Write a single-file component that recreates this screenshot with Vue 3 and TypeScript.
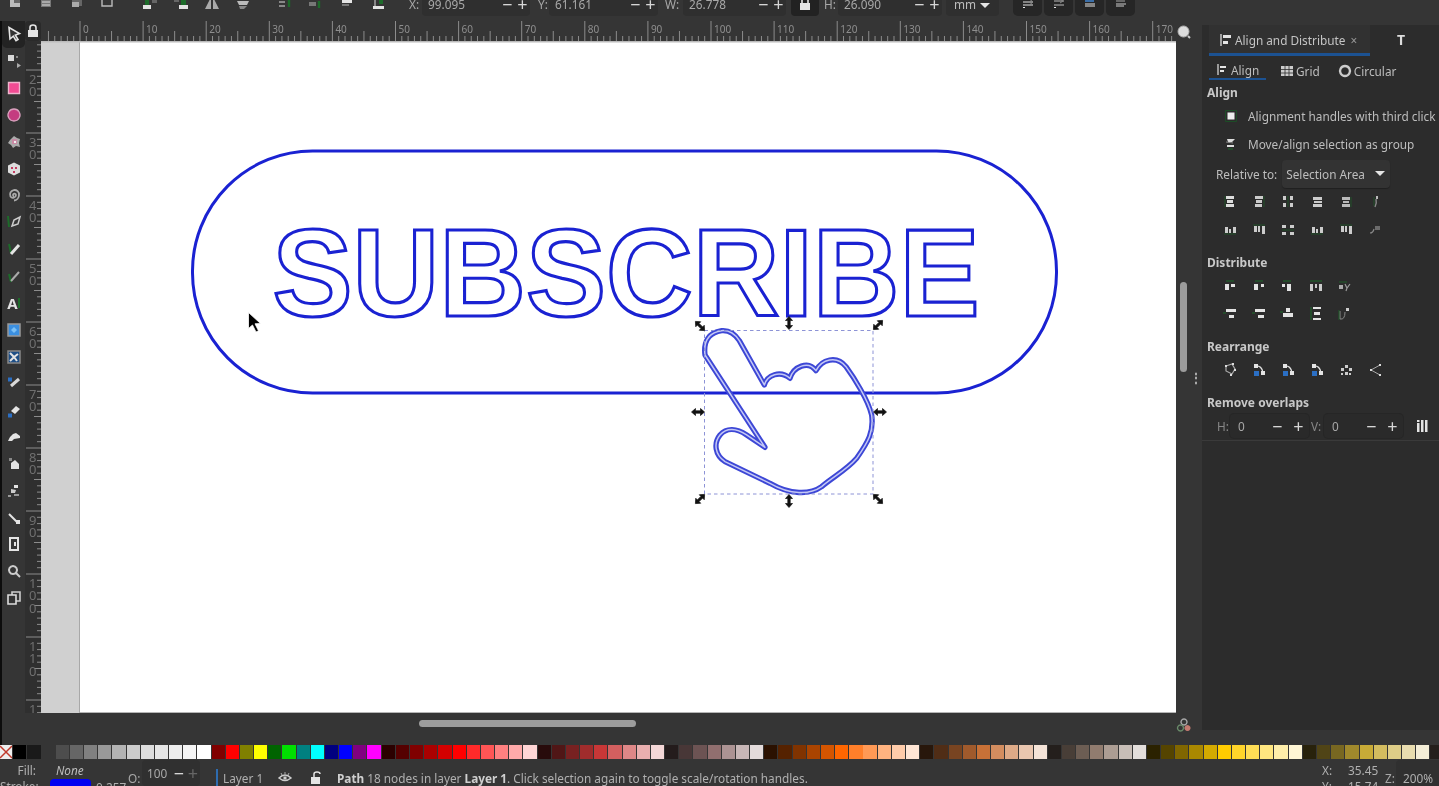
<script setup lang="ts">
import { h, type FunctionalComponent } from 'vue'

type Shape = { d?: string; f?: string; s?: string; w?: number; t?: string }

const W = '#e4e4e4'
const G = '#1d6b2a'
const B = '#2b6fc4'
const P = '#d9d9d9'

const icons: Record<string, Shape[]> = {
  select: [{ d: 'M3 1.5l10.5 6-4.2 1.6 2.7 4.4-2 1.2-2.7-4.5L4 13z', s: W, w: 1.6, f: '#333' }],
  node: [{ d: 'M2 2h6v6H2z', f: P }, { d: 'M11 10l4 2.5-4 2.5z', f: '#aaa' }, { d: 'M10 3h2v2h-2z', f: '#888' }],
  rect: [{ d: 'M2.5 2.5h11v11h-11z', f: '#f24b93', s: '#efb5cd', w: 1.4 }],
  circle: [{ d: 'M8 2a6 6 0 1 0 .01 0z', f: '#c43c80', s: '#d9a0bd', w: 1.3 }],
  star: [{ d: 'M8 2l3 2 3 1-1 4 1 4-4-1-3 2-2-3-3-2 2-3z', f: '#aaa' }, { d: 'M6 5h5v5H6z', f: '#c98aa5' }, { d: 'M8 7h2v2H8z', f: '#eee' }],
  box: [{ d: 'M8 1.5l6 3v7l-6 3-6-3v-7z', f: '#ddd' }, { d: 'M5 6h2v2H5zM9 6h2v2H9zM7 10h2v2H7z', f: '#c43c60' }],
  spiral: [{ d: 'M8 9.5a1.5 1.5 0 1 1 2-1.5 3 3 0 0 1-5.5 1.5A4.5 4.5 0 1 1 13 8a5.5 5.5 0 0 1-5 5.5', s: '#aaa', w: 1.8 }],
  pen: [{ d: 'M2 2l1 11', s: G, w: 2 }, { d: 'M6 12l2-6 6-3-2 7z', s: '#ccc', w: 1.5 }],
  pencil: [{ d: 'M3 3l2 9', s: G, w: 2 }, { d: 'M5 13L13 4', s: W, w: 3 }],
  callig: [{ d: 'M3 6l2 8', s: G, w: 2 }, { d: 'M5 13L13 4', s: '#aaa', w: 2 }],
  text: [{ t: 'A', f: W }, { d: 'M13 3v10', s: G, w: 2 }],
  gradient: [{ d: 'M2 2h12v12H2z', f: '#3b8fe0', s: '#999', w: 1.5 }, { d: 'M8 5l3 3-3 3-3-3z', f: '#7cc0f5' }],
  mesh: [{ d: 'M2 2h12v12H2z', f: '#1f4f86', s: '#888', w: 1.5 }, { d: 'M8 8L4 4M8 8l4-3M8 8l3 4M8 8l-4 4', s: W, w: 2 }],
  dropper: [{ d: 'M5 11l8-7', s: P, w: 3 }, { d: 'M2 2.5h4v4H2z', f: B }],
  bucket: [{ d: 'M5 9l5-5 4 3-5 5z', f: W }, { d: 'M2 11.5h4v4H2z', f: B }],
  eraser: [{ d: 'M2 12q1-4 5-7l3-1 4 3v2l-6 1-2 2z', f: W }],
  fill: [{ d: 'M3 2h3v3H3z', f: '#888' }, { d: 'M5 7l4-3 4 4v5H5z', f: W }],
  spray: [{ d: 'M8 2h4v3H8z', f: W }, { d: 'M5 6l5 1-1 3H5z', f: '#ccc' }, { d: 'M2 12h3v2H2zM8 11h5v2H8z', f: '#999' }],
  conn: [{ d: 'M3 4l8 8', s: W, w: 2 }, { d: 'M10 10h4v4h-4z', f: W }],
  page: [{ d: 'M4 2h8v12H4z', s: W, w: 2 }, { d: 'M8 6h2v4H8z', f: W }],
  zoom: [{ d: 'M7 3a4 4 0 1 0 .01 0z', s: '#ccc', w: 2 }, { d: 'M10 10l4 4', s: '#ccc', w: 2 }],
  pages: [{ d: 'M6 2h8v9H6z', s: '#ccc', w: 1.6 }, { d: 'M2 5h8v9H2z', s: '#ddd', w: 1.6, f: '#333' }],

  top1: [{ d: 'M3 0h10v11H3z', f: '#bbb' }, { d: 'M7 0h6v7H7z', f: '#666' }],
  top2: [{ d: 'M3 0h10v11H3z', f: '#777' }, { d: 'M4 3h8M4 6h8M4 9h8', s: '#ddd', w: 1 }],
  top3: [{ d: 'M3 0h10v10H3z', f: '#666' }, { d: 'M3 6h7v5H3z', f: '#aaa' }],
  top4: [{ d: 'M2 0h10v10H2z', s: '#bbb', w: 1.4 }],
  lift1: [{ d: 'M1 9h8v4H1z', f: W }, { d: 'M3 4h4v5H3z', f: G }, { d: 'M10 2h5v5h-5z', f: '#666' }],
  lift2: [{ d: 'M6 9h9v4H6z', f: W }, { d: 'M8 3h5v6H8z', f: G }, { d: 'M1 1h5v5H1z', f: '#666' }],
  flip1: [{ d: 'M7 1v12L1 13zM9 1v12l6 0z', f: '#aaa' }],
  flip2: [{ d: 'M2 5h12l-2 4H4z', f: '#bbb' }, { d: 'M4 10h8l-3 3H5z', f: '#888' }],
  raise1: [{ d: 'M2 1h6v2H2zM2 5h6v2H2zM2 9h6v2H2z', f: '#888' }, { d: 'M12 2v9', s: G, w: 2.4 }],
  raise2: [{ d: 'M1 1h12v3H1z', f: '#aaa' }, { d: 'M1 6h7v4H1z', f: '#777' }, { d: 'M11 5v7', s: G, w: 2.4 }],
  raise3: [{ d: 'M3 4h10v3H3z', f: W }, { d: 'M3 8h7v2H3z', f: '#777' }, { d: 'M11 0h3v4h-3z', f: G }],
  raise4: [{ d: 'M3 10h11v3H3z', f: W }, { d: 'M4 1h2v9H4z', f: '#888' }, { d: 'M9 2h4v6H9z', f: G }],

  snap1: [{ d: 'M3 6h10M3 9h10', s: W, w: 1 }, { d: 'M10 3.500l3 2.500-3 2.500', s: '#888', w: 1 }, { d: 'M3 11h2v1H3z', f: W }],
  snap2: [{ d: 'M3 5h10M3 9h10', s: '#bbb', w: 1 }, { d: 'M9 3l3 2-3 2', s: '#888', w: 1 }, { d: 'M3 11h2v1H3z', f: W }],
  snap3: [{ d: 'M3 2h9v4H3z', f: '#3a6ea8' }, { d: 'M3 8h10M3 10h10', s: W, w: 1 }],
  snap4: [{ d: 'M3 3h9v3H3z', f: '#666' }, { d: 'M3 8h10M3 10h8', s: '#ccc', w: 1 }],

  align: [{ d: 'M3 2v12', s: '#ddd', w: 1.3 }, { d: 'M5 3h8v3H5zM5 9h5v3H5z', f: W }],
  alignSm: [{ d: 'M4 2v11', s: W, w: 1.2 }, { d: 'M6 4h6v2H6zM6 8h4v2H6z', f: W }],
  grid: [{ d: 'M2 3h12v10H2z', f: '#ccc' }, { d: 'M6 3v10M10 3v10M2 6.5h12M2 10h12', s: '#2d2d2d', w: 0.8 }],
  circ: [{ d: 'M8 3a5 5 0 1 0 .01 0z', s: '#ccc', w: 2.4, }],
  third: [{ d: 'M2.5 2.5h11v11h-11z', s: '#1c4d26', w: 1 }, { d: 'M4.5 4.5h7v7h-7z', f: '#eee' }],
  group: [{ d: 'M4 3h8l-3 3H5zM4 9h7v2H4z', f: '#ddd' }, { d: 'M3 6l7 1', s: '#888', w: 1 }, { d: 'M5 13h5', s: G, w: 1 }],

  a1: [{ d: 'M4 2h8v3H4zM5 6h6v3H5zM4 10h8v3H4z', f: '#ddd' }, { d: 'M3 2v11', s: G, w: 0.6 }],
  a2: [{ d: 'M4 2h8v3H4zM5 6h6v3H5zM4 10h7v3H4z', f: '#ccc' }, { d: 'M13 2v11', s: G, w: 0.6 }],
  a3: [{ d: 'M3 2h3v4H3zM10 2h3v4h-3zM3 9h3v4H3zM10 9h3v4h-3z', f: '#ccc' }, { d: 'M8 2v11', s: G, w: 0.6 }],
  a4: [{ d: 'M4 3h9v3H4zM5 7h8v2H5zM4 10h9v3H4z', f: '#ccc' }],
  a5: [{ d: 'M4 3h8v3H4zM5 7h6v2H5zM4 10h8v3H4z', f: '#bbb' }, { d: 'M13 3v10', s: G, w: 0.6 }],
  a6: [{ d: 'M8 13q2-4 1-8', s: '#888', w: 1.4 }, { d: 'M9 2h2v3H9z', f: '#bbb' }, { d: 'M7 3v9', s: G, w: 0.6 }],
  b1: [{ d: 'M3 5h3v6H3zM7 7h2v4H7zM11 5h3v6h-3z', f: '#ccc' }, { d: 'M2 12h12', s: G, w: 0.6 }],
  b2: [{ d: 'M3 4h3v6H3zM7 4h2v6H7zM11 4h3v8h-3z', f: '#ccc' }, { d: 'M2 3h12', s: G, w: 0.6 }],
  b3: [{ d: 'M2 3h4v3H2zM10 3h4v3h-4zM2 10h4v3H2zM10 10h4v3h-4z', f: '#ccc' }, { d: 'M2 8h12', s: G, w: 0.6 }],
  b6: [{ d: 'M3 11q3 0 4-4', s: '#888', w: 1.2 }, { d: 'M8 5h5M8 7h5', s: '#aaa', w: 1 }],

  d1: [{ d: 'M3 5h4v6H3zM9 5h4v3H9z', f: W }, { d: 'M4 2h8', s: G, w: 1 }],
  d2: [{ d: 'M3 5h4v6H3zM10 5h3v3h-3z', f: W }, { d: 'M4 2h8', s: G, w: 1 }],
  d3: [{ d: 'M3 5h3v3H3zM8 5h4v7H8z', f: W }, { d: 'M4 2h8', s: G, w: 1 }],
  d4: [{ d: 'M2 5h3v7H2zM7 5h2v4H7zM11 5h3v7h-3z', f: '#ccc' }, { d: 'M2 2h12', s: G, w: 1 }],
  d5: [{ d: 'M3 6h4v4H3z', f: '#aaa' }, { d: 'M9 5l2 4 3-4M11 9l-1 3', s: '#999', w: 1.2 }, { d: 'M3 3h8', s: G, w: 0.8 }],
  e1: [{ d: 'M4 3h10v3H4zM7 9h5v3H7z', f: W }, { d: 'M1 7h3', s: G, w: 1 }],
  e2: [{ d: 'M4 3h10v3H4zM7 9h6v3H7z', f: W }, { d: 'M1 7h3', s: G, w: 1 }],
  e3: [{ d: 'M7 2h4v4H7zM4 7h10v4H4z', f: W }, { d: 'M1 6h3', s: G, w: 1 }],
  e4: [{ d: 'M5 1h8v2H5zM6 6h6v3H6zM5 12h8v2H5z', f: W }, { d: 'M3 1v13', s: G, w: 1 }],
  e5: [{ d: 'M4 5v8M4 13q5 1 5-7', s: '#888', w: 1 }, { d: 'M10 2h3v3h-3z', f: '#ccc' }, { d: 'M3 4v10', s: G, w: 0.8 }],

  r1: [{ d: 'M4 4l6-2 3 5-3 5-6-3z', s: '#aaa', w: 1.2 }, { d: 'M3 3h2v2H3zM10 1h2v2h-2zM12 7h2v2h-2zM8 12h2v2H8z', f: '#ddd' }],
  r2: [{ d: 'M4 4q7-1 8 7', s: W, w: 1.4 }, { d: 'M3 2h4v4H3zM10 9h4v4h-4z', f: W }, { d: 'M3 9h5v5H3z', f: B }],
  r5: [{ d: 'M3 6h3v3H3zM7 3h3v3H7zM11 6h3v3h-3zM7 10h3v3H7zM3 11h2v2H3zM11 11h2v2h-2z', f: '#ccc' }],
  r6: [{ d: 'M13 3L4 8l9 5', s: '#aaa', w: 1 }, { d: 'M3 7h2v2H3zM12 2h2v2h-2zM12 12h2v2h-2z', f: '#ddd' }],
  ovl: [{ d: 'M3 5h2.500v9H3zM7 2h2.500v12H7zM11 2h2.500v12H11z', f: W }, { d: 'M3 2h2.500v2H3z', f: W }],

  eye: [{ d: 'M2 8q6-6 12 0-6 5-12 0z', s: '#ccc', w: 1.5 }, { d: 'M6.500 6.500h3v3h-3z', f: '#ccc' }, { d: 'M4 3l1 2M12 3l-1 2M8 2v2', s: '#aaa', w: 1 }],
  lock: [{ d: 'M3 7h9v7H3z', f: W }, { d: 'M6 7V4q0-2 3-2t3 2', s: W, w: 1.5 }],
  lockClosed: [{ d: 'M3 7h10v7H3z', f: W }, { d: 'M5 7V4.500q0-2.500 3-2.500t3 2.500V7', s: W, w: 1.6 }],
  oneone: [{ d: 'M7.500 2a5.500 5.500 0 1 0 .01 0z', f: '#ddd', s: '#aaa', w: 1 }, { d: 'M12 12l2 2', s: '#ccc', w: 2 }],
  cms: [{ d: 'M8 2a3 3 0 1 0 .01 0z', s: '#aaa', w: 1.4 }, { d: 'M4.500 8a3 3 0 1 0 .01 0z', s: '#6a8a6a', w: 1.4 }, { d: 'M11.500 8a3 3 0 1 0 .01 0z', f: '#c47a70' }],
}

const Ic: FunctionalComponent<{ name: string }> = (props) =>
  h(
    'svg',
    { viewBox: '0 0 16 16', width: 16, height: 16 },
    icons[props.name].map((s) =>
      s.t
        ? h('text', { x: 6.5, y: 13.5, 'text-anchor': 'middle', 'font-size': 15, 'font-weight': 700, 'font-family': 'Noto Sans, sans-serif', fill: s.f }, s.t)
        : h('path', { d: s.d, fill: s.f ?? 'none', stroke: s.s ?? 'none', 'stroke-width': s.w ?? 0 }),
    ),
  )
Ic.props = ['name']

const topGroups = [
  ['top1', 'top2', 'top3', 'top4'],
  ['lift1', 'lift2', 'flip1', 'flip2'],
  ['raise1', 'raise2', 'raise3', 'raise4'],
]
const snapIcons = ['snap1', 'snap2', 'snap3', 'snap4']
const tools = [
  'select', 'node', 'rect', 'circle', 'star', 'box', 'spiral', 'pen', 'pencil', 'callig', 'text',
  'gradient', 'mesh', 'dropper', 'bucket', 'eraser', 'fill', 'spray', 'conn', 'page', 'zoom', 'pages',
]
const alignRows = [
  ['a1', 'a2', 'a3', 'a4', 'a5', 'a6'],
  ['b1', 'b2', 'b3', 'b1', 'b2', 'b6'],
]
const distRows = [
  ['d1', 'd2', 'd3', 'd4', 'd5'],
  ['e1', 'e2', 'e3', 'e4', 'e5'],
]
const rearrange = ['r1', 'r2', 'r2', 'r2', 'r5', 'r6']

const hex =
  '000000 1a1a1a - 4d4d4d 666666 808080 999999 b3b3b3 cccccc dddddd e6e6e6 eeeeee f5f5f5 ffffff ' +
  '800000 ff0000 808000 ffff00 006400 00e000 008080 00ffff 000080 0000ff 800080 ff00ff ' +
  '2b0000 550000 800000 aa0000 d40000 ff0000 ff2a2a ff5555 ff8080 ffaaaa ffd5d5 ' +
  '280b0b 501616 782121 a02c2c c83737 d35f5f de8787 e9afaf f4d7d7 ' +
  '241c1c 483737 6c5353 916f6f ac9393 c8b7b7 e3dbdb ' +
  '2b1100 552200 803300 aa4400 d45500 ff6600 ff7f2a ff9955 ffb380 ffccaa ffe6d5 ' +
  '28170b 502d16 784421 a05a2c c87137 d38d5f deaa87 e9c6af f4e3d7 ' +
  '241f1c 483e37 6c5d53 917c6f ac9d93 c8beb7 e3dedb ' +
  '2b2200 554400 806600 aa8800 d4aa00 ffcc00 ffd42a ffdd55 ffe680 ffeeaa fff6d5 ' +
  '28220b 504416 786721 a0892c c8ab37 d3bc5f decd87 e9ddaf f4eed7 241f1c'
const swatches = hex.split(' ').map((c) => (c === '-' ? 'transparent' : '#' + c))

const mmX = 6.31
const hTicks: { x: number; top: number }[] = []
for (let mm = -5; mm <= 174; mm++) {
  hTicks.push({ x: 80 + mm * mmX, top: mm % 10 === 0 ? 21 : mm % 5 === 0 ? 31 : 36 })
}
const hLabels: { x: number; v: number }[] = []
for (let v = 0; v <= 170; v += 10) hLabels.push({ x: 80 + v * mmX + 3, v })

const mmY = 6.3
const vTicks: { y: number; left: number }[] = []
for (let mm = 15; mm <= 127; mm++) {
  const y = 133 + (mm - 30) * mmY
  if (y >= 42) vTicks.push({ y, left: mm % 10 === 0 ? 26 : mm % 5 === 0 ? 34 : 37 })
}
const vLabels: { y: number; v: string }[] = []
for (let v = 20; v <= 120; v += 10) vLabels.push({ y: 133 + (v - 30) * mmY, v: String(v) })

const handles = [
  [700, 326, 45], [878, 325, -45], [700, 499, -45], [878, 499, 45],
  [789, 323, 90], [789, 501, 90], [698, 412, 0], [880, 412, 0],
]
const handPath =
  'M75 135C70 95 85 68 125 62C150 60 165 72 178 92L253 225C262 195 300 180 330 205C340 170 385 150 408 182' +
  'C425 148 470 135 498 170C520 200 565 270 575 315C582 365 565 395 530 445C500 480 460 500 425 530' +
  'C390 555 330 555 270 520L135 455C105 435 100 400 120 375C140 352 170 355 200 375L255 412Z'
</script>

<template>
  <div class="app">
    <header class="toolbar">
      <div v-for="(group, i) in topGroups" :key="i" class="top-group">
        <Ic v-for="name in group" :key="name" :name="name" class="top-ic" />
      </div>
      <span class="lbl lx">X:</span>
      <div class="spin sx"><span class="val">99.095</span><i>−</i><i>+</i></div>
      <span class="lbl ly">Y:</span>
      <div class="spin sy"><span class="val">61.161</span><i>−</i><i>+</i></div>
      <span class="lbl lw">W:</span>
      <div class="spin sw"><span class="val">26.778</span><i>−</i><i>+</i></div>
      <div class="lock-btn"><Ic name="lockClosed" class="top-ic" /></div>
      <span class="lbl lh">H:</span>
      <div class="spin sh"><span class="val">26.090</span><i>−</i><i>+</i></div>
      <div class="unit">mm <b class="caret"></b></div>
      <div class="snaps">
        <div v-for="name in snapIcons" :key="name" class="snap"><Ic :name="name" class="top-ic" /></div>
      </div>
    </header>

    <div class="main">
      <aside class="tools">
        <div v-for="(name, i) in tools" :key="i" class="tool" :class="{ active: i === 0 }"><Ic :name="name" /></div>
      </aside>

      <div class="workspace">
        <div class="hruler">
          <div class="ruler-lock"><Ic name="lockClosed" /></div>
          <svg class="hruler-svg" viewBox="41 21 1135 20" width="1135" height="20">
            <line v-for="t in hTicks" :key="t.x" :x1="t.x" :x2="t.x" :y1="t.top" y2="41" stroke="#8c8c8c" />
            <text v-for="l in hLabels" :key="l.v" :x="l.x" y="33" class="tick-label">{{ l.v }}</text>
          </svg>
        </div>

        <div class="canvas-row">
          <svg class="vruler" viewBox="25 41 16 672" width="16" height="672">
            <line v-for="t in vTicks" :key="t.y" :x1="t.left" x2="41" :y1="t.y" :y2="t.y" stroke="#8c8c8c" />
            <text v-for="l in vLabels" :key="l.v" class="tick-label big" :y="l.y + 1">
              <tspan v-for="(ch, i) in l.v" :key="i" x="29" dy="12.500">{{ ch }}</tspan>
            </text>
          </svg>

          <svg class="canvas" viewBox="41 41 1135 672" width="1135" height="672">
            <rect x="41" y="41" width="39" height="672" fill="#d0d0d0" />
            <rect x="79" y="41" width="1.500" height="672" fill="#a8a8a8" />
            <rect x="80" y="41" width="1096" height="672" fill="#fff" />
            <rect x="41" y="41" width="1135" height="1.500" fill="#bbb" />
            <rect x="192.500" y="151" width="864" height="242" rx="120" fill="none" stroke="#1a22d2" stroke-width="3" />
            <text x="272.500" y="316" class="subscribe" textLength="707" lengthAdjust="spacingAndGlyphs">SUBSCRIBE</text>

            <path d="M248.500 312.500v16l4-3.500 3.500 7 2.500-1.200-3.500-7 5.500-.300z" fill="#000" stroke="#fff" stroke-width=".8" />

            <g transform="translate(680 310) scale(.3333)">
              <path :d="handPath" fill="none" stroke="#3d47d6" stroke-width="16" stroke-linejoin="round" />
              <path :d="handPath" fill="none" stroke="#c4c8f5" stroke-width="4.500" stroke-linejoin="round" />
            </g>

            <rect x="704.500" y="330.500" width="168.500" height="163.500" fill="none" stroke="#8d93d6" stroke-dasharray="3.500 3" />
            <path
              v-for="(a, i) in handles"
              :key="i"
              :transform="`translate(${a[0]} ${a[1]}) rotate(${a[2]})`"
              d="M-6.500 0L-2.500 -3.500V-1.200H2.500V-3.500L6.500 0L2.500 3.500V1.200H-2.500V3.500Z"
              fill="#111"
              stroke="#111"
              stroke-width=".7"
            />
            <line x1="80" x2="1176" y1="712.500" y2="712.500" stroke="#b5b5b5" />
          </svg>
        </div>

        <div class="hscroll"><div class="hthumb"></div></div>
      </div>

      <div class="vscroll">
        <Ic name="oneone" class="vs-top" />
        <div class="vthumb"></div>
        <Ic name="cms" class="vs-bottom" />
        <span class="grip">⋮</span>
      </div>

      <aside class="panel">
        <div class="dock-tabs">
          <div class="dock-tab"><Ic name="align" class="dock-ic" />Align and Distribute<span class="close">×</span></div>
          <span class="dock-t">T</span>
        </div>
        <div class="sub-tabs">
          <div class="sub-tab current"><Ic name="alignSm" class="dock-ic" />Align</div>
          <div class="sub-tab tab-grid"><Ic name="grid" class="dock-ic" />Grid</div>
          <div class="sub-tab tab-circ"><Ic name="circ" class="dock-ic" />Circular</div>
        </div>

        <h4 class="sec first">Align</h4>
        <div class="opt"><Ic name="third" />Alignment handles with third click</div>
        <div class="opt"><Ic name="group" />Move/align selection as group</div>
        <div class="relative">
          <span>Relative to:</span>
          <div class="select">Selection Area<b class="caret"></b></div>
        </div>
        <div v-for="(row, i) in alignRows" :key="i" class="icons">
          <Ic v-for="(n, j) in row" :key="j" :name="n" />
        </div>

        <h4 class="sec s-dist">Distribute</h4>
        <div v-for="(row, i) in distRows" :key="i" class="icons dist">
          <Ic v-for="(n, j) in row" :key="j" :name="n" />
        </div>

        <h4 class="sec s-rearr">Rearrange</h4>
        <div class="icons">
          <Ic v-for="(n, j) in rearrange" :key="j" :name="n" />
        </div>

        <h4 class="sec s-over">Remove overlaps</h4>
        <div class="overlaps">
          <span class="dim">H:</span>
          <div class="spin sm"><span class="val">0</span><i>−</i><i>+</i></div>
          <span class="dim">V:</span>
          <div class="spin sm"><span class="val">0</span><i>−</i><i>+</i></div>
          <Ic name="ovl" class="ovl" />
        </div>
      </aside>
    </div>

    <div class="palette">
      <div class="none-swatch">
        <svg viewBox="0 0 12 14" width="12" height="14">
          <rect width="12" height="14" fill="#eee" />
          <path d="M0 1l12 12M12 1L0 13" stroke="#c0392b" stroke-width="1.500" />
        </svg>
      </div>
      <div v-for="(c, i) in swatches" :key="i" class="swatch" :style="{ background: c }"></div>
    </div>

    <footer class="status">
      <div class="fillstroke">
        <div class="fs-row"><span class="fs-lbl fill-lbl">Fill:</span><em>None</em></div>
        <div class="fs-row"><span class="fs-lbl stroke-lbl">Stroke:</span><span class="stroke-chip"></span><span class="stroke-w">0.257</span></div>
      </div>
      <span class="lbl o-lbl">O:</span>
      <div class="spin opacity"><span class="val">100</span><i>−</i><i class="faint">+</i></div>
      <div class="layer"><span>Layer 1</span></div>
      <Ic name="eye" class="st-eye" />
      <Ic name="lock" class="st-lock" />
      <div class="message"><b>Path</b> 18 nodes in layer <b>Layer 1</b>. Click selection again to toggle scale/rotation handles.</div>
      <div class="coords">
        <span>X:</span><span class="num">35.45</span>
        <span>Y:</span><span class="num">15.74</span>
      </div>
      <span class="lbl z-lbl">Z:</span>
      <div class="zoom-box">200%</div>
    </footer>
  </div>
</template>

<style scoped>
.app {
  width: 1439px;
  height: 786px;
  display: flex;
  flex-direction: column;
  overflow: hidden;
  background: #353535;
  color: #bdbdbd;
  font-family: "Noto Sans", "Open Sans", sans-serif;
  font-size: 11.8px;
  filter: blur(0.35px);
}

svg {
  display: block;
  flex: none;
}

/* top toolbar, cut off by the video crop */
.toolbar {
  height: 21px;
  flex: none;
  display: flex;
  align-items: flex-start;
  overflow: hidden;
  padding-left: 7px;
}

.top-group {
  display: flex;
  gap: 15px;
  margin-right: 26px;
}

.top-group:nth-child(3) {
  margin-right: 15px;
}

.top-ic {
  margin-top: -4px;
}

.lbl {
  line-height: 8px;
  color: #a8a8a8;
  flex: none;
}

.lx { width: 13px; margin-left: 8px; }
.ly { width: 11px; margin-left: 8px; }
.lw { width: 18px; margin-left: 7px; }
.lh { width: 14px; margin-left: 5px; }

.spin {
  flex: none;
  height: 16px;
  display: flex;
  align-items: flex-start;
  background: #2f2f2f;
  border-radius: 0 0 4px 4px;
  padding-left: 6px;
  box-sizing: border-box;
  line-height: 8px;
  color: #a8a8a8;
}

.spin .val {
  flex: 1;
}

.spin i {
  width: 15px;
  text-align: center;
  font-style: normal;
  font-size: 18px;
  line-height: 9px;
  color: #d6d6d6;
}

.sx { width: 108px; }
.sy { width: 109px; }
.sw { width: 103px; }
.sh { width: 104px; }

.lock-btn {
  width: 28px;
  height: 16px;
  margin-left: 5px;
  background: #222;
  border-radius: 0 0 4px 4px;
  display: flex;
  justify-content: center;
  flex: none;
}

.unit {
  width: 53px;
  height: 16px;
  margin-left: 4px;
  padding-left: 8px;
  box-sizing: border-box;
  background: #2f2f2f;
  border-radius: 0 0 4px 4px;
  line-height: 8px;
  flex: none;
}

.snaps {
  display: flex;
  gap: 2px;
  margin-left: 14px;
}

.snap {
  width: 29px;
  height: 16px;
  background: #262626;
  border-radius: 0 0 5px 5px;
  display: flex;
  justify-content: center;
}

.caret {
  display: inline-block;
  width: 0;
  height: 0;
  border-left: 5px solid transparent;
  border-right: 5px solid transparent;
  border-top: 5px solid #e6e6e6;
}

.unit .caret {
  vertical-align: 1px;
  margin-left: 1px;
}

.main {
  height: 724px;
  flex: none;
  display: flex;
  min-height: 0;
}

/* tool column */
.tools {
  width: 23px;
  border-left: 2px solid #0c0c0c;
  display: grid;
  grid-auto-rows: 26.85px;
  align-content: start;
  flex: none;
}

.tool {
  display: flex;
  align-items: center;
  justify-content: center;
}

.tool.active {
  background: #232323;
  border-radius: 0 0 5px 5px;
}

.workspace {
  width: 1151px;
  flex: none;
  display: flex;
  flex-direction: column;
}

.hruler {
  height: 20px;
  flex: none;
  display: flex;
}

.ruler-lock {
  width: 16px;
  background: #2a2a2a;
  border-radius: 4px;
  display: flex;
  align-items: center;
  justify-content: center;
}

.tick-label {
  font-size: 10px;
  fill: #8e8e8e;
}

.tick-label.big {
  font-size: 13px;
  fill: #6f6f6f;
}

.canvas-row {
  display: flex;
  height: 672px;
  flex: none;
}

.vruler {
  background: #2f2f2f;
}

.subscribe {
  font-family: "Liberation Sans", Arial, sans-serif;
  font-weight: 700;
  font-size: 125px;
  fill: none;
  stroke: #1a22d2;
  stroke-width: 3.2px;
}

.hscroll {
  flex: 1;
  padding: 7px 0 0 394px;
}

.hthumb {
  width: 217px;
  height: 7px;
  background: #9c9c9c;
  border-radius: 4px;
}

.vscroll {
  width: 26px;
  flex: none;
  position: relative;
}

.vs-top {
  margin-top: 3px;
}

.vthumb {
  width: 7px;
  height: 90px;
  margin: 242px 0 0 4px;
  background: #9c9c9c;
  border-radius: 4px;
}

.vs-bottom {
  margin-top: 345px;
}

.grip {
  position: absolute;
  left: 13px;
  top: 347px;
  font-size: 14px;
  font-weight: 700;
  color: #aaa;
}

/* right dock */
.panel {
  width: 237px;
  flex: none;
  margin-top: 4px;
  height: 705px;
  background: #2c2c2c;
  display: flex;
  flex-direction: column;
  overflow: hidden;
}

.dock-tabs {
  height: 31px;
  display: flex;
  padding-left: 7px;
  flex: none;
}

.dock-tab {
  width: 161px;
  box-sizing: border-box;
  display: flex;
  align-items: center;
  padding: 2px 0 0 9px;
  border-bottom: 3px solid #1c5292;
  background: #313131;
  color: #c4c4c4;
  white-space: nowrap;
}

.dock-ic {
  margin-right: 1px;
}

.close {
  margin-left: 5px;
  color: #999;
}

.dock-t {
  margin-left: 27px;
  font-size: 14px;
  font-weight: 700;
  color: #ddd;
  line-height: 30px;
}

.sub-tabs {
  height: 24px;
  display: flex;
  padding-left: 7px;
  flex: none;
}

.sub-tab {
  display: flex;
  align-items: center;
  box-sizing: border-box;
  padding-top: 5px;
  white-space: nowrap;
}

.sub-tab.current {
  width: 57px;
  padding-left: 5px;
  border-bottom: 2px solid #1c5292;
}

.tab-grid { margin-left: 13px; }
.tab-circ { margin-left: 17px; }

.sec {
  margin: 0;
  font-size: 12px;
  font-weight: 700;
  line-height: 18px;
  color: #c8c8c8;
  padding-left: 5px;
  flex: none;
}

.first { margin-top: 4px; }
.s-dist { margin-top: 10px; padding-bottom: 1px; }
.s-rearr { margin-top: 11px; }
.s-over { margin-top: 10px; }

.opt {
  height: 28px;
  display: flex;
  align-items: center;
  gap: 9px;
  padding-left: 21px;
  white-space: nowrap;
  flex: none;
}

.relative {
  height: 29px;
  margin-top: 1px;
  display: flex;
  align-items: center;
  padding-left: 14px;
  flex: none;
}

.select {
  width: 108px;
  height: 28px;
  margin-left: 5px;
  padding: 0 5px 0 4px;
  box-sizing: border-box;
  display: flex;
  align-items: center;
  justify-content: space-between;
  background: #333;
  border-radius: 4px;
  box-shadow: 0 1px 1px #202020;
}

.icons {
  height: 28px;
  display: grid;
  grid-template-columns: repeat(6, 29px);
  align-items: center;
  justify-items: center;
  padding-left: 13px;
  flex: none;
}

.icons.dist {
  height: 27px;
  grid-template-columns: repeat(5, 28.500px);
  padding-left: 14px;
}

.overlaps {
  height: 28px;
  display: flex;
  align-items: center;
  padding-left: 15px;
  flex: none;
  border-bottom: 1px solid #3a3a3a;
}

.dim {
  color: #888;
  width: 13px;
  flex: none;
}

.spin.sm {
  width: 79px;
  height: 24px;
  align-items: center;
  margin-right: 2px;
  line-height: 24px;
  border-radius: 4px;
  padding-left: 8px;
  background: #2a2a2a;
  box-shadow: 0 0 0 1px #262626;
}

.spin.sm i {
  width: 21px;
  line-height: 24px;
}

.ovl {
  margin-left: 9px;
}

/* palette */
.palette {
  height: 15px;
  flex: none;
  display: grid;
  grid-auto-flow: column;
  grid-auto-columns: 14.180px;
  margin-left: -1px;
}

.swatch {
  height: 14px;
  width: 13.200px;
}

.none-swatch {
  height: 14px;
  overflow: hidden;
  padding-left: 1px;
}

/* status bar */
.status {
  flex: 1;
  display: flex;
  overflow: hidden;
  color: #b0b0b0;
  position: relative;
}

.fillstroke {
  width: 128px;
  flex: none;
}

.fs-row {
  height: 16px;
  display: flex;
  align-items: center;
  white-space: nowrap;
}

.fs-row:first-child {
  margin-top: 2px;
}

.fs-lbl {
  text-align: right;
  flex: none;
}

.fill-lbl { width: 36px; }
.stroke-lbl { width: 36px; }

.fs-row em {
  margin-left: 20px;
  color: #bcbcbc;
}

.stroke-chip {
  width: 41px;
  height: 14px;
  margin-left: 14px;
  background: #0000f0;
  border-radius: 4px;
  flex: none;
}

.stroke-w {
  margin-left: 5px;
  padding-top: 2px;
}

.o-lbl {
  line-height: 36px;
  width: 14px;
}

.spin.opacity {
  width: 58px;
  height: 26px;
  align-items: center;
  line-height: 36px;
  background: #303030;
  border-radius: 4px;
  padding-left: 5px;
}

.spin.opacity i {
  line-height: 36px;
  width: 14px;
}

.spin.opacity .faint {
  color: #666;
}

.layer {
  margin-left: 16px;
  margin-top: 9px;
  padding-left: 5px;
  border-left: 2px solid #2e6cb0;
  width: 53px;
  flex: none;
  line-height: 18px;
  height: 20px;
  white-space: nowrap;
}

.st-eye {
  margin: 10px 0 0 1px;
}

.st-lock {
  margin: 10px 0 0 15px;
}

.message {
  margin: 9px 0 0 13px;
  line-height: 18px;
  white-space: nowrap;
  width: 975px;
  flex: none;
}

.message b {
  color: #cfcfcf;
}

.coords {
  position: absolute;
  left: 1322px;
  top: 2px;
  display: grid;
  grid-template-columns: 26px auto;
  line-height: 16px;
  white-space: nowrap;
}

.z-lbl {
  position: absolute;
  left: 1385px;
  top: 14px;
}

.zoom-box {
  position: absolute;
  left: 1396px;
  top: 0;
  width: 43px;
  height: 26px;
  padding-left: 7px;
  box-sizing: border-box;
  line-height: 36px;
  background: #303030;
  border-radius: 4px 0 0 0;
}
</style>
